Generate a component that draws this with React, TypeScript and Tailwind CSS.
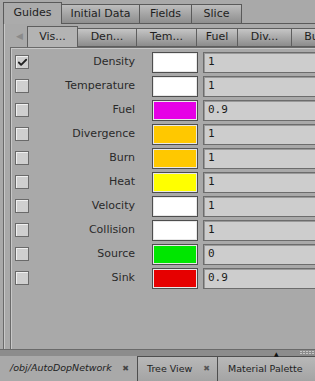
import { Check } from "lucide-react";

const rows = [
  { label: "Density", color: "#ffffff", value: "1", checked: true },
  { label: "Temperature", color: "#ffffff", value: "1" },
  { label: "Fuel", color: "#e600e6", value: "0.9" },
  { label: "Divergence", color: "#ffc800", value: "1" },
  { label: "Burn", color: "#ffc800", value: "1" },
  { label: "Heat", color: "#ffff00", value: "1" },
  { label: "Velocity", color: "#ffffff", value: "1" },
  { label: "Collision", color: "#ffffff", value: "1" },
  { label: "Source", color: "#00e600", value: "0" },
  { label: "Sink", color: "#e60000", value: "0.9" },
];

const topTabs = [
  { label: "Guides", w: "w-[59px]" },
  { label: "Initial Data", w: "w-[78px]" },
  { label: "Fields", w: "w-[52px]" },
  { label: "Slice", w: "w-[50px]" },
];
const subTabs = [
  { label: "Vis...", w: "w-[51px]" },
  { label: "Den...", w: "w-[59px]" },
  { label: "Tem...", w: "w-[60px]" },
  { label: "Fuel", w: "w-[41px]" },
  { label: "Div...", w: "w-[54px]" },
  { label: "Bu", w: "w-[40px]" },
];

function TopTab({ label, w, active }: { label: string; w: string; active: boolean }) {
  if (active) {
    return (
      <div
        className={`flex h-[22px] ${w} shrink-0 items-center justify-center border-x border-t border-[#5a5a5a] bg-[#ababab] pb-[1px] text-[11px] text-[#1e1e1e]`}
      >
        {label}
      </div>
    );
  }
  return (
    <div
      className={`flex h-[20px] ${w} shrink-0 items-center justify-center border-y border-r border-[#5a5a5a] bg-gradient-to-b from-[#bdbdbd] to-[#8e8e8e] text-[11px] text-[#1e1e1e]`}
    >
      {label}
    </div>
  );
}

function ValueRow({ label, color, value, checked }: (typeof rows)[number]) {
  return (
    <div className="flex h-[24px] items-center">
      <div className="flex h-[14px] w-[14px] shrink-0 items-center justify-center border border-[#6a6a6a] bg-[#cfcfcf] shadow-[inset_1px_1px_0_#f0f0f0]">
        {checked && <Check className="h-[11px] w-[11px] text-[#222]" strokeWidth={4} />}
      </div>
      <div className="w-[107px] shrink-0 pr-[1px] text-right text-[11px] text-[#2a2a2a]">{label}</div>
      <div
        className="ml-[16px] h-[21px] w-[46px] shrink-0 border border-[#4e4e4e] shadow-[inset_0_0_0_1px_#e8e8e8]"
        style={{ backgroundColor: color }}
      />
      <div className="ml-[5px] flex h-[21px] w-[130px] shrink-0 items-center border border-[#6c6c6c] bg-[#cdcdcd] pl-[4px] font-['DejaVu_Sans_Mono',monospace] text-[11px] text-[#1a1a1a] shadow-[inset_1px_1px_0_#999]">
        {value}
      </div>
    </div>
  );
}

export default function App() {
  return (
    <div className="flex h-[381px] w-[315px] flex-col overflow-hidden bg-[#a9a9a9] font-['DejaVu_Sans',sans-serif]">
      {/* Top tabs */}
      <div className="flex h-[24px] shrink-0 items-end pl-[3px]">
        {topTabs.map((t, i) => (
          <TopTab key={t.label} label={t.label} w={t.w} active={i === 0} />
        ))}
        <div className="h-[1px] flex-1 self-end bg-[#5a5a5a]" />
      </div>

      {/* Guides panel */}
      <div className="ml-[3px] flex min-h-0 flex-1 flex-col border-l border-[#6a6a6a] pl-[6px] shadow-[inset_1px_0_0_#c8c8c8]">
        {/* Sub tabs */}
        <div className="flex h-[23px] shrink-0 items-end overflow-hidden pt-[2px]">
          <div className="flex h-[21px] w-[17px] shrink-0 items-center justify-end pr-[4px] text-[9px] text-[#8a8a8a]">◀</div>
          {subTabs.map((t, i) =>
            i === 0 ? (
              <div
                key={t.label}
                className={`flex h-[21px] ${t.w} shrink-0 items-center justify-center border-x border-t border-[#5e5e5e] bg-[#b3b3b3] text-[11px] text-[#1e1e1e]`}
              >
                {t.label}
              </div>
            ) : (
              <div
                key={t.label}
                className={`flex h-[19px] ${t.w} shrink-0 items-center justify-center border-y border-r border-[#5e5e5e] bg-gradient-to-b from-[#c6c6c6] to-[#8c8c8c] text-[11px] text-[#1e1e1e]`}
              >
                {t.label}
              </div>
            ),
          )}
        </div>

        {/* Inner panel */}
        <div className="flex min-h-0 flex-1 flex-col overflow-hidden border-l border-t border-[#6a6a6a] pl-[4px] pt-[2px] shadow-[inset_1px_1px_0_#c8c8c8]">
          {rows.map((r) => (
            <ValueRow key={r.label} {...r} />
          ))}
        </div>
      </div>

      {/* Splitter */}
      <div className="relative h-[7px] shrink-0 border-t border-[#6a6a6a] bg-[#8c8c8c]">
        <div className="absolute left-[274px] top-[1px] text-[6px] leading-none text-[#111]">▲</div>
        <div className="absolute right-[1px] top-[1px] grid grid-cols-5 gap-[1px]">
          {Array.from({ length: 10 }).map((_, i) => (
            <div key={i} className="h-[1px] w-[2px] bg-[#c8c8c8]" />
          ))}
        </div>
      </div>

      {/* Bottom tabs */}
      <div className="flex h-[25px] shrink-0 items-stretch whitespace-nowrap text-[9.5px] text-[#1e1e1e]">
        <div className="flex w-[137px] shrink-0 items-center bg-[#a9a9a9] pl-[10px] pr-[8px]">
          <span className="flex-1 italic">/obj/AutoDopNetwork</span>
          <span className="text-[8px] text-[#444]">✖</span>
        </div>
        <div className="flex w-[80px] shrink-0 items-center border-l border-t border-[#4e4e4e] bg-gradient-to-b from-[#b8b8b8] to-[#a4a4a4] pl-[9px] pr-[7px]">
          <span className="flex-1">Tree View</span>
          <span className="text-[8px] text-[#555]">✖</span>
        </div>
        <div className="flex flex-1 items-center border-l border-t border-[#4e4e4e] bg-gradient-to-b from-[#b8b8b8] to-[#a4a4a4] pl-[10px]">
          <span>Material Palette</span>
        </div>
      </div>
    </div>
  );
}
